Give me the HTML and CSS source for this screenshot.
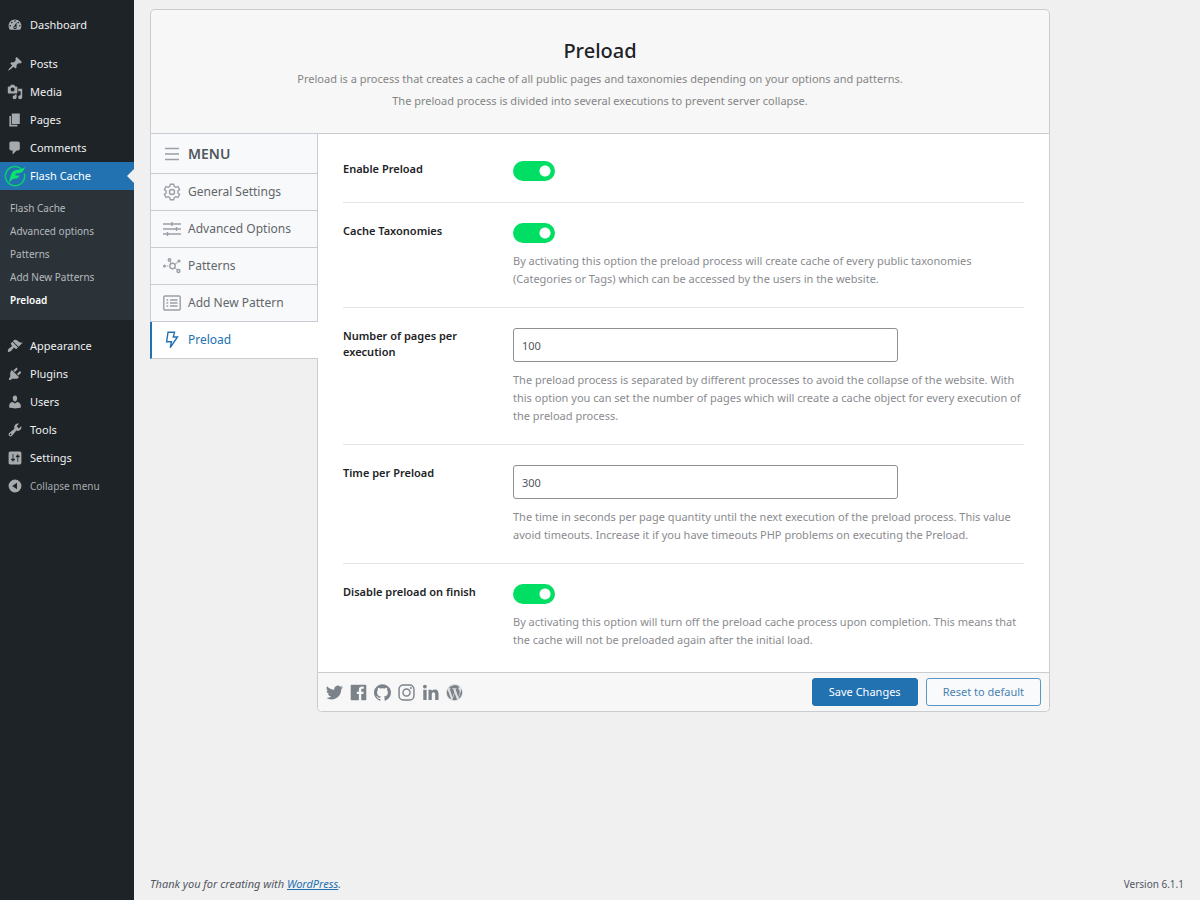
FILE: index.html
```
<!DOCTYPE html>
<html lang="en">
<head>
<meta charset="utf-8">
<meta name="viewport" content="width=device-width, initial-scale=1">
<title>Preload</title>
<link rel="stylesheet" href="styles.css">
</head>
<body>
<div class="admin">
  <nav class="sidebar" aria-label="Main menu">
    <ul class="menu">
      <li class="menu-group-end"><a class="menu-link" href="#"><svg class="menu-icon" viewBox="0 0 20 20"><path fill-rule="evenodd" d="M3.76 16h12.48c1.1-1.37 1.76-3.11 1.76-5 0-4.42-3.58-8-8-8s-8 3.58-8 8c0 1.89.66 3.63 1.76 5zM10 4c.55 0 1 .45 1 1s-.45 1-1 1-1-.45-1-1 .45-1 1-1zM6 6c.55 0 1 .45 1 1s-.45 1-1 1-1-.45-1-1 .45-1 1-1zm8 0c.55 0 1 .45 1 1s-.45 1-1 1-1-.45-1-1 .45-1 1-1zm-5.37 5.55L12 7v6c0 1.1-.9 2-2 2s-2-.9-2-2c0-.57.24-1.08.63-1.45zM4 10c.55 0 1 .45 1 1s-.45 1-1 1-1-.45-1-1 .45-1 1-1zm12 0c.55 0 1 .45 1 1s-.45 1-1 1-1-.45-1-1 .45-1 1-1zm-5 3c0-.55-.45-1-1-1s-1 .45-1 1 .45 1 1 1 1-.45 1-1z"/></svg>Dashboard</a></li>
      <li><a class="menu-link" href="#"><svg class="menu-icon" viewBox="0 0 20 20"><path d="M10.44 3.02l1.82-1.82 6.36 6.35-1.83 1.82c-1.05-.68-2.48-.57-3.41.36l-.75.75c-.92.93-1.04 2.35-.35 3.41l-1.83 1.82-2.41-2.41-2.8 2.79c-.42.42-3.38 2.71-3.8 2.29s1.86-3.39 2.28-3.81l2.79-2.79L4.1 9.36l1.83-1.82c1.05.69 2.48.57 3.4-.36l.75-.75c.93-.92 1.05-2.35.36-3.41z"/></svg>Posts</a></li>
      <li><a class="menu-link" href="#"><svg class="menu-icon" viewBox="0 0 20 20"><path fill-rule="evenodd" d="M13 11V4c0-.55-.45-1-1-1h-1.67L9 1H5L3.67 3H2c-.55 0-1 .45-1 1v7c0 .55.45 1 1 1h10c.55 0 1-.45 1-1zM7 4.5c1.38 0 2.5 1.12 2.5 2.5S8.38 9.5 7 9.5 4.5 8.38 4.5 7 5.62 4.5 7 4.5zM14 6h5v10.5c0 1.38-1.12 2.5-2.5 2.5S14 17.88 14 16.5s1.12-2.5 2.5-2.5c.17 0 .34.02.5.05V9h-3V6zm-4 8.05V13h2v3.5c0 1.38-1.12 2.5-2.5 2.5S7 17.88 7 16.5 8.12 14 9.5 14c.17 0 .34.02.5.05z"/></svg>Media</a></li>
      <li><a class="menu-link" href="#"><svg class="menu-icon" viewBox="0 0 20 20"><path d="M6 15V2h10v13H6zm-1 1h8v2H3V5h2v11z"/></svg>Pages</a></li>
      <li><a class="menu-link" href="#"><svg class="menu-icon" viewBox="0 0 20 20"><path d="M5 2h9c1.1 0 2 .9 2 2v7c0 1.1-.9 2-2 2h-2l-5 5v-5H5c-1.1 0-2-.9-2-2V4c0-1.1.9-2 2-2z"/></svg>Comments</a></li>
      <li class="menu-current">
        <a class="menu-link menu-link-active" href="#"><svg class="brand-icon" viewBox="0 0 22 22"><path class="brand-ring" d="M17.500 4A9.600 9.600 0 1 0 20.300 8.500"/><path class="brand-mark" d="M5 18C6 14 6.500 7 10.500 5.500C13.500 4.600 17 5 21 2C20.200 5.500 18 7.600 15.500 8L12 8.500L11.200 10.500H15.500C14.700 12.600 13.500 13.300 11.500 13.500L9.700 13.800C8 14.300 7 16 5 18Z"/></svg>Flash Cache</a>
        <ul class="submenu">
          <li><a class="submenu-link" href="#">Flash Cache</a></li>
          <li><a class="submenu-link" href="#">Advanced options</a></li>
          <li><a class="submenu-link" href="#">Patterns</a></li>
          <li><a class="submenu-link" href="#">Add New Patterns</a></li>
          <li><a class="submenu-link submenu-link-active" href="#">Preload</a></li>
        </ul>
      </li>
      <li><a class="menu-link" href="#"><svg class="menu-icon" viewBox="0 0 20 20"><path d="M14.480 11.060L7.410 3.990l1.500-1.500c.5-.56 2.300-.47 3.510.32 1.210.8 1.430 1.280 2.910 2.100 1.180.64 2.450 1.260 4.450.85zm-.71.71L6.700 4.700 4.930 6.470c-.39.39-.39 1.020 0 1.410l1.060 1.060c.39.39.39 1.030 0 1.420-.6.6-1.430 1.110-2.210 1.690-.35.26-.7.53-1.010.84C1.430 14.230.4 16.080 1.400 17.070c.99 1 2.840-.03 4.180-1.360.31-.31.58-.66.85-1.020.57-.78 1.080-1.610 1.690-2.210.39-.39 1.020-.39 1.410 0l1.060 1.060c.39.39 1.020.39 1.410 0z"/></svg>Appearance</a></li>
      <li><a class="menu-link" href="#"><svg class="menu-icon" viewBox="0 0 20 20"><path d="M13.110 4.360L9.870 7.600 8 5.730l3.240-3.240c.35-.34 1.050-.2 1.560.32.52.51.66 1.210.31 1.550zm-8 1.770l.91-1.120 9.010 9.010-1.190.84c-.71.71-2.630 1.160-3.820 1.160H6.140L4.900 17.260c-.59.59-1.540.59-2.120 0-.59-.58-.59-1.530 0-2.120l1.240-1.240v-3.880c0-1.130.4-3.190 1.090-3.890zm7.260 3.970l3.240-3.240c.34-.35 1.040-.21 1.550.31.52.51.66 1.210.31 1.550l-3.240 3.250z"/></svg>Plugins</a></li>
      <li><a class="menu-link" href="#"><svg class="menu-icon" viewBox="0 0 20 20"><path d="M10 9.250c-2.270 0-2.730-3.440-2.730-3.440C7 4.020 7.820 2 9.970 2c2.160 0 2.980 2.020 2.710 3.810 0 0-.41 3.440-2.680 3.440zm0 2.570L12.720 10c2.390 0 4.520 2.330 4.520 4.530v2.490s-3.650 1.130-7.240 1.130c-3.650 0-7.240-1.130-7.240-1.130v-2.490c0-2.250 1.940-4.480 4.470-4.480z"/></svg>Users</a></li>
      <li><a class="menu-link" href="#"><svg class="menu-icon" viewBox="0 0 20 20"><path fill-rule="evenodd" d="M16.680 9.770c-1.340 1.340-3.300 1.670-4.950.99l-5.410 6.520c-.99.99-2.590.99-3.580 0s-.99-2.590 0-3.570l6.520-5.420c-.68-1.650-.35-3.610.99-4.950 1.280-1.280 3.120-1.620 4.720-1.060l-2.890 2.890 2.820 2.820 2.860-2.870c.53 1.580.18 3.390-1.080 4.650zM3.810 16.210c.4.39 1.040.39 1.430 0 .4-.4.4-1.040 0-1.430-.39-.4-1.030-.4-1.430 0-.39.39-.39 1.030 0 1.430z"/></svg>Tools</a></li>
      <li><a class="menu-link" href="#"><svg class="menu-icon" viewBox="0 0 20 20"><path fill-rule="evenodd" d="M18 16V4c0-1.100-.9-2-2-2H4c-1.100 0-2 .9-2 2v12c0 1.100.9 2 2 2h12c1.100 0 2-.9 2-2zM8 11h1c.55 0 1 .45 1 1s-.45 1-1 1H8v1.500c0 .28-.22.5-.5.5s-.5-.22-.5-.5V13H6c-.55 0-1-.45-1-1s.45-1 1-1h1V5.500c0-.28.22-.5.5-.5s.5.22.5.5V11zm5-2h-1c-.55 0-1-.45-1-1s.45-1 1-1h1V5.500c0-.28.22-.5.5-.5s.5.22.5.5V7h1c.55 0 1 .45 1 1s-.45 1-1 1h-1v5.500c0 .28-.22.5-.5.5s-.5-.22-.5-.5V9z"/></svg>Settings</a></li>
      <li><button class="menu-link menu-collapse" type="button"><svg class="menu-icon" viewBox="0 0 20 20"><path fill-rule="evenodd" d="M10 2a8 8 0 1 0 0 16a8 8 0 0 0 0-16zM12.500 6v8L6.500 10z"/></svg>Collapse menu</button></li>
    </ul>
  </nav>

  <div class="page">
    <main class="panel">
      <header class="panel-header">
        <h1 class="panel-title">Preload</h1>
        <p class="panel-intro">Preload is a process that creates a cache of all public pages and taxonomies depending on your options and patterns.<br>The preload process is divided into several executions to prevent server collapse.</p>
      </header>
      <nav class="tabs" aria-label="Plugin sections">
        <div class="tab tab-heading"><svg class="tab-icon" viewBox="0 0 18 18"><path d="M2 3.500h14M2 9h14M2 14.500h14"/></svg>MENU</div>
        <a class="tab" href="#"><svg class="tab-icon" viewBox="0 0 18 18"><path d="M7.300 1.200h3.400l.5 2.200 1.500.9 2.200-.7 1.700 2.900-1.700 1.600v1.800l1.700 1.600-1.700 2.900-2.200-.7-1.500.9-.5 2.200H7.300l-.5-2.200-1.500-.9-2.200.7-1.700-2.900 1.700-1.600V8.100L1.400 6.500l1.700-2.900 2.200.7 1.500-.9z"/><circle cx="9" cy="9" r="2.500"/></svg>General Settings</a>
        <a class="tab" href="#"><svg class="tab-icon" viewBox="0 0 18 18"><path d="M0 4h18M0 9h18M0 14h18M9 2v4M13.500 7v4M4.500 12v4"/></svg>Advanced Options</a>
        <a class="tab" href="#"><svg class="tab-icon" viewBox="0 0 18 18"><circle cx="9.500" cy="9" r="2.700"/><circle class="dot" cx="1.500" cy="9" r="1.500"/><circle cx="6.500" cy="3" r="1.200"/><circle class="dot" cx="16" cy="4" r="1.600"/><circle cx="15.500" cy="14" r="1.500"/><path class="thin" d="M3.800 9h1.500M7 4.200l1.200 2.500M12 7.300l2.800-2.300M11.800 10.700l2.500 2.200"/></svg>Patterns</a>
        <a class="tab" href="#"><svg class="tab-icon" viewBox="0 0 18 18"><rect x=".8" y="2" width="16.400" height="14" rx="1"/><path d="M7 6h7.500M7 9h7.500M7 12h7.500M3.500 6h1.700M3.500 9h1.700M3.500 12h1.700"/></svg>Add New Pattern</a>
        <a class="tab tab-active" href="#" aria-current="page"><svg class="tab-icon" viewBox="0 0 18 18"><path d="M5 1.300h6.500l-1.200 4.700h4.200L7.200 16.700l1.300-6H3.600z"/></svg>Preload</a>
      </nav>
      <form class="content">
        <div class="fields">
          <div class="field">
            <label class="field-label" for="enable">Enable Preload</label>
            <div class="field-body"><input class="toggle" type="checkbox" role="switch" id="enable" checked></div>
          </div>
          <div class="field">
            <label class="field-label" for="taxonomies">Cache Taxonomies</label>
            <div class="field-body"><input class="toggle" type="checkbox" role="switch" id="taxonomies" checked>
              <p class="help">By activating this option the preload process will create cache of every public taxonomies (Categories or Tags) which can be accessed by the users in the website.</p></div>
          </div>
          <div class="field">
            <label class="field-label" for="pages">Number of pages per execution</label>
            <div class="field-body"><input class="text-input" type="text" inputmode="numeric" id="pages" value="100">
              <p class="help">The preload process is separated by different processes to avoid the collapse of the website. With this option you can set the number of pages which will create a cache object for every execution of the preload process.</p></div>
          </div>
          <div class="field">
            <label class="field-label" for="time">Time per Preload</label>
            <div class="field-body"><input class="text-input" type="text" inputmode="numeric" id="time" value="300">
              <p class="help">The time in seconds per page quantity until the next execution of the preload process. This value avoid timeouts. Increase it if you have timeouts PHP problems on executing the Preload.</p></div>
          </div>
          <div class="field">
            <label class="field-label" for="disable">Disable preload on finish</label>
            <div class="field-body"><input class="toggle" type="checkbox" role="switch" id="disable" checked>
              <p class="help">By activating this option will turn off the preload cache process upon completion. This means that the cache will not be preloaded again after the initial load.</p></div>
          </div>
        </div>
        <div class="actions">
          <div class="social">
            <a href="#" aria-label="Twitter"><svg viewBox="0 0 24 24"><path d="M23.950 4.570a10 10 0 0 1-2.820.77 4.960 4.960 0 0 0 2.160-2.720c-.95.55-2 .95-3.130 1.180a4.920 4.920 0 0 0-8.380 4.480C7.690 8.090 4.070 6.130 1.640 3.160a4.920 4.920 0 0 0 1.520 6.570 4.900 4.900 0 0 1-2.230-.61v.06a4.920 4.920 0 0 0 3.950 4.830 5 5 0 0 1-2.210.08 4.940 4.940 0 0 0 4.600 3.420A9.870 9.870 0 0 1 0 19.540a13.990 13.990 0 0 0 7.550 2.210c9.050 0 14-7.500 14-13.980 0-.21 0-.42-.02-.63a9.940 9.940 0 0 0 2.460-2.550z"/></svg></a>
            <a href="#" aria-label="Facebook"><svg viewBox="0 0 24 24"><path d="M22 1H2a1 1 0 0 0-1 1v20a1 1 0 0 0 1 1h10.500v-8.800H9.600v-3.400h2.900V8.200c0-3 1.900-4.500 4.500-4.500 1.200 0 2.100.1 2.500.1v3h-1.800c-1.400 0-1.800.7-1.800 1.700v2.300h3.400l-.5 3.400h-2.900V23H22a1 1 0 0 0 1-1V2a1 1 0 0 0-1-1z"/></svg></a>
            <a href="#" aria-label="GitHub"><svg viewBox="0 0 24 24"><path d="M12 .3a12 12 0 0 0-3.800 23.380c.6.12.83-.26.83-.57L9 21.070c-3.340.72-4.040-1.610-4.040-1.610-.55-1.390-1.340-1.760-1.340-1.760-1.080-.74.09-.73.09-.73 1.200.09 1.840 1.240 1.840 1.240 1.070 1.830 2.810 1.300 3.500 1 .1-.78.42-1.310.76-1.610-2.670-.3-5.470-1.330-5.470-5.930 0-1.310.47-2.380 1.240-3.220-.14-.3-.54-1.520.1-3.180 0 0 1-.32 3.300 1.230a11.500 11.500 0 0 1 6 0c2.280-1.550 3.290-1.230 3.290-1.230.64 1.660.24 2.880.12 3.180a4.650 4.650 0 0 1 1.230 3.220c0 4.610-2.800 5.630-5.480 5.920.42.36.81 1.100.81 2.220l-.01 3.290c0 .31.2.69.82.57A12 12 0 0 0 12 .3"/></svg></a>
            <a href="#" aria-label="Instagram"><svg viewBox="0 0 24 24" class="outline"><rect x="1.500" y="1.500" width="21" height="21" rx="6"/><circle cx="12" cy="12" r="5"/><circle cx="18.200" cy="5.800" r=".5"/></svg></a>
            <a href="#" aria-label="LinkedIn"><svg viewBox="0 0 24 24"><path d="M1.800 8h4.700v14.500H1.800zM4.100 1a2.700 2.700 0 1 1 0 5.400 2.700 2.700 0 0 1 0-5.400zM9.200 8h4.500v2c.8-1.400 2.300-2.400 4.300-2.400 4.300 0 5.300 2.900 5.300 6.900v8h-4.700v-7.200c0-1.900-.2-3.700-2.300-3.700-2.200 0-2.500 1.700-2.500 3.600v7.300H9.200z"/></svg></a>
            <a href="#" aria-label="WordPress"><svg viewBox="0 0 24 24" class="wordpress"><path d="M21.470 6.830a10.800 10.800 0 0 1-4.050 14.500l3.300-9.530c.61-1.540.82-2.770.82-3.870 0-.4-.03-.77-.07-1.100m-7.980.1c.65-.03 1.240-.1 1.240-.1.580-.08.51-.93-.07-.9 0 0-1.760.14-2.890.14-1.060 0-2.850-.15-2.850-.15-.58-.03-.66.850-.08.88 0 0 .54.06 1.120.09l1.680 4.600-2.370 7.080L5.350 6.900c.65-.03 1.240-.1 1.240-.1.580-.07.51-.93-.07-.9 0 0-1.750.140-2.880.140A10.800 10.800 0 0 1 19.280 4.080c-1.090 0-1.830.93-1.830 1.920 0 .89.51 1.640 1.060 2.530.41.720.89 1.640.89 2.970 0 .91-.35 1.980-.82 3.450l-1.070 3.580zM12 22.780c-1.060 0-2.080-.15-3.050-.44l3.240-9.410 3.320 9.090a2 2 0 0 0 .080.150c-1.120.39-2.330.61-3.590.61M1.210 12c0-1.560.34-3.050.93-4.390L7.290 21.700A10.790 10.790 0 0 1 1.210 12"/></svg></a>
          </div>
          <div class="buttons">
            <button class="button button-primary" type="submit">Save Changes</button>
            <button class="button" type="reset">Reset to default</button>
          </div>
        </div>
      </form>
    </main>
    <footer class="page-footer">
      <p class="thanks">Thank you for creating with <a href="#">WordPress</a>.</p>
      <p class="version">Version 6.1.1</p>
    </footer>
  </div>
</div>
</body>
</html>
```
FILE: styles.css
```
* {
  box-sizing: border-box;
}

body {
  margin: 0;
  background: #f0f0f1;
  color: #3c434a;
  font: 11px/18px "Noto Sans", "Open Sans", sans-serif;
}

ul,
p,
h1 {
  margin: 0;
  padding: 0;
  list-style: none;
}

a {
  color: inherit;
  text-decoration: none;
}

button,
input {
  font: inherit;
}

svg {
  display: block;
  flex: none;
}

.admin {
  display: flex;
  min-height: 100vh;
}

/* Sidebar */
.sidebar {
  flex: none;
  width: 134px;
  background: #1d2327;
}

.menu {
  padding-top: 11px;
}

.menu-group-end {
  margin-bottom: 11px;
}

.menu-link {
  position: relative;
  display: flex;
  align-items: center;
  gap: 7px;
  width: 100%;
  height: 28px;
  padding: 0 7px;
  color: #f0f0f1;
}

.menu-icon {
  width: 16px;
  height: 16px;
  fill: #a7aaad;
}

.menu-current {
  margin-bottom: 12px;
}

.menu-link-active {
  gap: 4px;
  padding-left: 4px;
  background: #2271b1;
  color: #fff;
}

.menu-link-active::after {
  content: "";
  position: absolute;
  top: 7px;
  right: 0;
  border: 7px solid transparent;
  border-left-width: 0;
  border-right-color: #f0f0f1;
}

.brand-icon {
  width: 22px;
  height: 22px;
}

.brand-ring {
  fill: none;
  stroke: #0ccf6f;
  stroke-width: 1.5;
}

.brand-mark {
  fill: #0be46a;
}

.submenu {
  padding: 7px 0 8px;
  background: #2c3338;
}

.submenu-link {
  display: block;
  padding: 0 10px;
  color: #b4b9be;
  font-size: 10px;
  line-height: 23px;
}

.submenu-link-active {
  color: #fff;
  font-weight: 600;
}

.menu-collapse {
  border: 0;
  background: none;
  color: #a7aaad;
  font-size: 10px;
}

/* Page column */
.page {
  display: flex;
  flex: 1;
  flex-direction: column;
  justify-content: space-between;
  min-width: 0;
  padding: 9px 16px 7px;
}

.panel {
  display: grid;
  grid-template-columns: 167px minmax(0, 1fr);
  align-items: start;
  width: 100%;
  max-width: 900px;
}

.panel-header {
  grid-column: 1 / -1;
  padding: 26px 20px 21px;
  border: 1px solid #c9ccd1;
  border-radius: 5px 5px 0 0;
  background: #f7f7f7;
  text-align: center;
}

.panel-title {
  margin-bottom: 2px;
  color: #1d2327;
  font-size: 20px;
  font-weight: 500;
  line-height: 30px;
}

.panel-intro {
  color: #858585;
  line-height: 22px;
}

/* Section tabs */
.tabs {
  border-left: 1px solid #c9ccd1;
}

.tab {
  display: flex;
  align-items: center;
  gap: 7px;
  height: 37px;
  padding-left: 12px;
  border-bottom: 1px solid #c9ccd1;
  background: #f8f9fa;
  color: #62666a;
  font-size: 12px;
}

.tab-heading {
  height: 40px;
  color: #50575e;
  font-size: 14px;
  font-weight: 600;
}

.tab-icon {
  width: 18px;
  height: 18px;
  fill: none;
  stroke: #9b9ea6;
  stroke-width: 1.4;
}

.tab-icon .dot {
  fill: #9b9ea6;
  stroke: none;
}

.tab-icon .thin {
  stroke-width: 1;
}

.tab-active {
  position: relative;
  margin: 0 -1px;
  padding-left: 11px;
  border-left: 2px solid #2271b1;
  background: #fff;
  color: #2271b1;
}

.tab-active .tab-icon {
  stroke: #2271b1;
}

/* Form */
.content {
  border: 1px solid #c9ccd1;
  border-top: 0;
  border-radius: 0 0 5px 5px;
  background: #fff;
}

.fields {
  padding: 7px 25px 4px;
}

.field {
  display: grid;
  grid-template-columns: 140px minmax(0, 1fr);
  column-gap: 30px;
  padding: 20px 0 19px;
}

.field:first-child {
  padding-bottom: 21px;
}

.field + .field {
  border-top: 1px solid #e2e4e7;
}

.field-label {
  color: #1d2327;
  font-weight: 600;
  line-height: 16px;
}

.toggle {
  display: block;
  width: 42px;
  height: 20px;
  margin: 0;
  border-radius: 10px;
  background: radial-gradient(circle at 32px 10px, #fff 5px, #00df64 6px);
  appearance: none;
}

.text-input {
  display: block;
  width: 100%;
  max-width: 385px;
  height: 34px;
  padding: 0 8px;
  border: 1px solid #8c8f94;
  border-radius: 3px;
  background: #fff;
  color: #50575e;
}

.help {
  padding-top: 9px;
  color: #8a8b90;
}

.actions {
  display: flex;
  align-items: center;
  justify-content: space-between;
  padding: 5px 8px;
  border-top: 1px solid #c9ccd1;
  border-radius: 0 0 5px 5px;
  background: #f7f7f7;
}

.social {
  display: flex;
  gap: 7px;
}

.buttons {
  display: flex;
  gap: 8px;
}

.social svg {
  width: 17px;
  height: 17px;
  fill: #7b8289;
}

.social .outline {
  fill: none;
  stroke: #7b8289;
  stroke-width: 2;
}

.social .wordpress {
  border-radius: 50%;
  background: #dcdee0;
}

.button {
  height: 28px;
  padding: 0 16px;
  border: 1px solid #5b95c4;
  border-radius: 3px;
  background: #f8fafc;
  color: #4a82b0;
}

.button-primary {
  border-color: #2271b1;
  background: #2271b1;
  color: #fff;
}

.page-footer {
  display: flex;
  justify-content: space-between;
  color: #50575e;
}

.thanks {
  font-style: italic;
}

.thanks a {
  color: #2271b1;
  text-decoration: underline;
}

.version {
  font-size: 10px;
}
```
